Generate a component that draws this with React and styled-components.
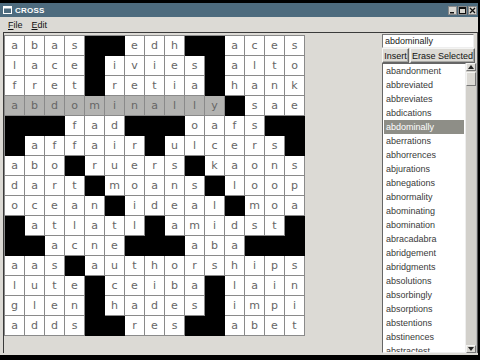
import React from 'react';
import styled, { createGlobalStyle } from 'styled-components';

const Global = createGlobalStyle`
  html, body { margin: 0; padding: 0; background: #000; }
  body { width: 480px; height: 360px; overflow: hidden; font-family: "Liberation Sans", Arial, sans-serif; }
`;

const Screen = styled.div`
  width: 480px;
  height: 360px;
  background: #000;
  padding-top: 3px;
  box-sizing: border-box;
`;

const Window = styled.div`
  width: 478px;
  height: 352px;
  background: #dcdad5;
  display: flex;
  flex-direction: column;
`;

const TitleBar = styled.div`
  height: 14px;
  flex: none;
  background: #4d6b7e;
  display: flex;
  align-items: center;
  padding: 0 1px 0 3px;
  gap: 3px;
  color: #fff;
  font-weight: bold;
  font-size: 8px;
  letter-spacing: 0.2px;
`;

const TitleText = styled.span`
  flex: 1;
`;

const Controls = styled.div`
  display: flex;
  gap: 1px;
`;

const CtrlBtn = styled.div`
  width: 9px;
  height: 9px;
  background: #d8d6d0;
  border: 1px solid #8a8a8a;
  box-sizing: border-box;
  display: flex;
  align-items: center;
  justify-content: center;
`;

const MenuBar = styled.div`
  height: 15px;
  flex: none;
  display: flex;
  align-items: center;
  gap: 9px;
  padding-left: 8px;
  font-size: 9px;
  color: #111;
`;

const MenuItem = styled.span`
  & > u { text-decoration: underline; }
`;

const Body = styled.div`
  flex: none;
  height: 321px;
  margin-left: 3px;
  border-top: 1px solid #3a3a3a;
  border-left: 1px solid #3a3a3a;
  border-right: 1px solid #555;
  display: flex;
  box-sizing: border-box;
`;

const Grid = styled.div`
  margin-top: 2px;
  align-self: flex-start;
  display: grid;
  grid-template-columns: repeat(15, 20px);
  grid-auto-rows: 20px;
  border-top: 1px solid #8a8a8a;
  border-left: 1px solid #8a8a8a;
`;

const Cell = styled.div`
  box-sizing: border-box;
  border-right: 1px solid ${p => (p.$black ? '#000' : '#8a8a8a')};
  border-bottom: 1px solid ${p => (p.$black ? '#000' : '#8a8a8a')};
  background: ${p => (p.$black ? '#000' : p.$hi ? '#b3b3b1' : '#fff')};
  display: flex;
  align-items: center;
  justify-content: center;
  font-family: "DejaVu Sans", sans-serif;
  font-size: 11px;
  color: #666;
`;

const Panel = styled.div`
  margin-left: auto;
  width: 96px;
  padding: 1px 0 0 1px;
  box-sizing: border-box;
  display: flex;
  flex-direction: column;
`;

const Entry = styled.div`
  height: 14px;
  width: 92px;
  box-sizing: border-box;
  background: #fff;
  border: 1px solid;
  border-color: #777 #eee #eee #777;
  font-size: 9px;
  color: #222;
  padding-left: 2px;
  line-height: 12px;
`;

const ButtonRow = styled.div`
  display: flex;
  gap: 1px;
  height: 15px;
`;

const Button = styled.div`
  box-sizing: border-box;
  height: 15px;
  padding: 0;
  background: #dcdad5;
  border: 1px solid;
  border-color: #f4f4f2 #666 #666 #f4f4f2;
  box-shadow: inset -1px -1px 0 #a8a8a4;
  font-size: 9px;
  color: #111;
  white-space: nowrap;
  display: flex;
  align-items: center;
  justify-content: center;
  width: ${p => p.$w}px;
`;

const ListArea = styled.div`
  flex: 1;
  display: flex;
  min-height: 0;
`;

const ListBox = styled.div`
  width: 86px;
  box-sizing: border-box;
  background: #fff;
  border: 1px solid;
  border-color: #666 #eee #eee #666;
  overflow: hidden;
  padding: 0 1px;
`;

const ListItem = styled.div`
  height: 14px;
  line-height: 14px;
  font-size: 9px;
  padding-left: 2px;
  white-space: nowrap;
  color: ${p => (p.$sel ? '#fff' : '#3a3a3a')};
  background: ${p => (p.$sel ? '#8e8e87' : 'transparent')};
`;

const ScrollBar = styled.div`
  width: 10px;
  background: #d2d0cb;
  display: flex;
  flex-direction: column;
  justify-content: space-between;
  border-right: 1px solid #bbb;
`;

const ScrollTop = styled.div`
  display: flex;
  flex-direction: column;
`;

const Arrow = styled.div`
  height: 8px;
  background: #dcdad5;
  border: 1px solid;
  border-color: #f4f4f2 #777 #777 #f4f4f2;
  box-sizing: border-box;
  display: flex;
  align-items: center;
  justify-content: center;
`;

const Thumb = styled.div`
  height: 14px;
  margin-top: 1px;
  background: #dcdad5;
  border: 1px solid;
  border-color: #f4f4f2 #777 #777 #f4f4f2;
  box-sizing: border-box;
`;

const rows = [
  'abas##edh##aces',
  'lace#ivies#alto',
  'fret#retia#hank',
  'abdominally#sae',
  '###fad###oafs##',
  '#affair#ulcers#',
  'abo#ruers#kaons',
  'dart#moans#loop',
  'ocean#ideal#moa',
  '#atlatl#amidst#',
  '##acne###aba###',
  'aas#authorships',
  'lute#ceiba#lain',
  'glen#hades#impi',
  'adds##res##abet',
];

const words = [
  'abandonment', 'abbreviated', 'abbreviates', 'abdications', 'abdominally',
  'aberrations', 'abhorrences', 'abjurations', 'abnegations', 'abnormality',
  'abominating', 'abomination', 'abracadabra', 'abridgement', 'abridgments',
  'absolutions', 'absorbingly', 'absorptions', 'abstentions', 'abstinences',
  'abstractest',
];

export default function App() {
  return (
    <Screen>
      <Global />
      <Window>
        <TitleBar>
          <svg width="9" height="8" viewBox="0 0 9 8">
            <rect x="0.5" y="0.5" width="8" height="7" fill="#fff" stroke="#fff" />
            <rect x="1" y="2.5" width="7" height="4.5" fill="#4d6b7e" />
          </svg>
          <TitleText>CROSS</TitleText>
          <Controls>
            <CtrlBtn>
              <svg width="7" height="7" viewBox="0 0 7 7"><rect x="1" y="5" width="4" height="1.5" fill="#111" /></svg>
            </CtrlBtn>
            <CtrlBtn>
              <svg width="7" height="7" viewBox="0 0 7 7"><rect x="0.5" y="0.5" width="6" height="6" fill="none" stroke="#111" /><rect x="0.5" y="0.5" width="6" height="1.5" fill="#111" /></svg>
            </CtrlBtn>
            <CtrlBtn>
              <svg width="7" height="7" viewBox="0 0 7 7"><path d="M1 1 L6 6 M6 1 L1 6" stroke="#111" strokeWidth="1.3" /></svg>
            </CtrlBtn>
          </Controls>
        </TitleBar>
        <MenuBar>
          <MenuItem><u>F</u>ile</MenuItem>
          <MenuItem><u>E</u>dit</MenuItem>
        </MenuBar>
        <Body>
          <Grid>
            {rows.map((r, ri) =>
              r.split('').map((ch, ci) => (
                <Cell key={ri + '-' + ci} $black={ch === '#'} $hi={ri === 3 && ci <= 10}>
                  {ch === '#' ? '' : ch}
                </Cell>
              ))
            )}
          </Grid>
          <Panel>
            <Entry>abdominally</Entry>
            <ButtonRow>
              <Button $w={27}>Insert</Button>
              <Button $w={65}>Erase Selected</Button>
            </ButtonRow>
            <ListArea>
              <ListBox>
                {words.map((w, i) => (
                  <ListItem key={w} $sel={i === 4}>{w}</ListItem>
                ))}
              </ListBox>
              <ScrollBar>
                <ScrollTop>
                  <Arrow>
                    <svg width="6" height="4" viewBox="0 0 6 4"><path d="M0 4 L3 0 L6 4 Z" fill="#222" /></svg>
                  </Arrow>
                  <Thumb />
                </ScrollTop>
                <Arrow>
                  <svg width="6" height="4" viewBox="0 0 6 4"><path d="M0 0 L3 4 L6 0 Z" fill="#222" /></svg>
                </Arrow>
              </ScrollBar>
            </ListArea>
          </Panel>
        </Body>
      </Window>
    </Screen>
  );
}
